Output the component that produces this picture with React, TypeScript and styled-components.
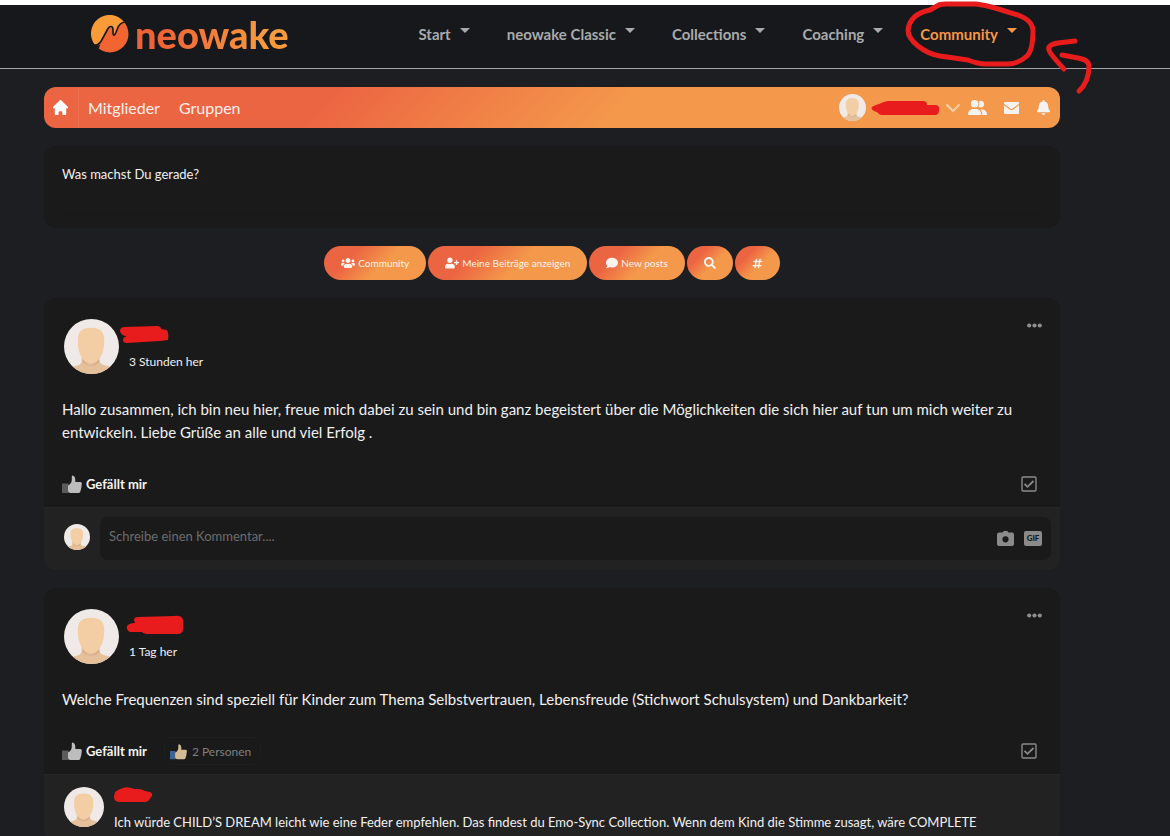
import React from "react";
import styled, { createGlobalStyle } from "styled-components";
import {
  FaBell,
  FaComment,
  FaHashtag,
  FaSearch,
  FaUserPlus,
  FaUsers,
} from "react-icons/fa";
import { FaUserGroup } from "react-icons/fa6";
import { HiHome } from "react-icons/hi";

const scribbleRed = "#e81c1c";
const warmGradient = "linear-gradient(135deg, #ec6542 28%, #f4994b 57%)";

const GlobalStyle = createGlobalStyle`
  *, *::before, *::after { box-sizing: border-box; }
  body {
    margin: 0;
    background: #1c1e22;
    color: #f1f1f1;
    font-family: Lato, "Liberation Sans", sans-serif;
    font-size: 15px;
  }
  button, input, textarea { font: inherit; color: inherit; }
  button { cursor: pointer; }
  svg { display: block; flex: none; }
`;

const Header = styled.header`
  position: relative;
  display: flex;
  align-items: center;
  justify-content: space-between;
  height: 69px;
  padding: 0 153px 0 91px;
  border-top: 5px solid #fff;
  border-bottom: 1px solid #a3a4a6;
  background: #17181b;
`;

const Logo = styled.a`
  display: flex;
  align-items: center;
  gap: 6px;
  padding-bottom: 6px;
  text-decoration: none;
`;

const Wordmark = styled.span`
  font-size: 38px;
  font-weight: 900;
  line-height: 38px;
  background: linear-gradient(90deg, #ee6238 15%, #f79a3e 85%);
  background-clip: text;
  -webkit-background-clip: text;
  color: transparent;
`;

const MainNav = styled.nav`
  display: flex;
  gap: 37px;
  padding-bottom: 6px;
`;

const NavLink = styled.a<{ $active?: boolean }>`
  display: flex;
  align-items: center;
  gap: 9px;
  color: ${(p) => (p.$active ? "#f79646" : "#a9aaac")};
  font-size: 15px;
  font-weight: 700;
  line-height: 20px;
  text-decoration: none;
`;

const Caret = styled.span`
  margin-bottom: 6px;
  border: 5px solid transparent;
  border-top-color: currentColor;
  border-bottom: 0;
`;

const Marking = styled.svg`
  position: absolute;
  top: -5px;
  right: 70px;
  z-index: 1;
  pointer-events: none;
`;

const Page = styled.main`
  display: flex;
  flex-direction: column;
  gap: 18px;
  margin: 18px 110px 0 44px;
`;

const Toolbar = styled.nav`
  display: flex;
  align-items: center;
  height: 41px;
  padding: 0 9px 0 7px;
  border-radius: 12px;
  background: ${warmGradient};
  color: #fdf3ee;
`;

const HomeLink = styled.a`
  display: flex;
  align-items: center;
  height: 100%;
  padding-right: 8px;
  border-right: 1px solid rgba(255, 255, 255, 0.08);
  color: #fff;
`;

const ToolbarLink = styled.a`
  margin-left: 9px;
  padding-right: 10px;
  color: #fdefe9;
  font-size: 16px;
  line-height: 24px;
  text-decoration: none;
`;

const ToolbarActions = styled.div`
  display: flex;
  align-items: center;
  gap: 17px;
  margin-left: auto;
`;

const IconButton = styled.button<{ $tone?: string }>`
  display: flex;
  align-items: center;
  gap: 5px;
  padding: 0;
  border: 0;
  background: none;
  color: ${(p) => p.$tone ?? "#f5f3f2"};
`;

const UserButton = styled(IconButton)`
  margin-right: -10px;
`;

const Composer = styled.section`
  padding: 16px 18px 18px;
  border-radius: 12px;
  background: #1a1a1a;
`;

const ComposerInput = styled.textarea`
  display: block;
  width: 100%;
  height: 48px;
  padding: 2px 0;
  border: 0;
  border-bottom: 1px solid #1d1d1d;
  background: none;
  font-size: 13px;
  line-height: 20px;
  outline: none;
  resize: none;
  &::placeholder { color: #f1f1f1; opacity: 1; }
`;

const Filters = styled.div`
  display: flex;
  justify-content: center;
  gap: 2px;
`;

const FilterButton = styled.button`
  display: flex;
  align-items: center;
  gap: 3px;
  height: 34px;
  padding: 0 17px;
  border: 0;
  border-radius: 17px;
  background: ${warmGradient};
  color: #fdf3ee;
  font-size: 10px;
`;

const Card = styled.article`
  overflow: hidden;
  border-radius: 12px;
  background: #1a1a1a;
`;

const CardBody = styled.div`
  padding: 21px 18px 8px;
`;

const Author = styled.div`
  display: flex;
  align-items: flex-start;
  padding-left: 2px;
`;

const AuthorText = styled.div`
  display: flex;
  flex-direction: column;
  gap: 8px;
  flex: 1;
  padding-top: 6px;
`;

const Time = styled.time`
  padding-left: 10px;
  font-size: 12px;
  line-height: 18px;
`;

const MenuButton = styled(IconButton)`
  height: 12px;
`;

const PostText = styled.p`
  margin: 24px 0 25px;
  font-size: 15px;
  line-height: 23px;
`;

const Actions = styled.div`
  display: flex;
  align-items: center;
  height: 30px;
  padding-right: 5px;
`;

const LikeButton = styled(IconButton)`
  gap: 4px;
  font-size: 13px;
  font-weight: 700;
`;

const LikeCount = styled.button`
  display: flex;
  align-items: center;
  gap: 5px;
  height: 28px;
  margin-left: 17px;
  padding: 0 9px 0 5px;
  border: 1px solid #1f1f1f;
  border-radius: 8px;
  background: none;
  color: #7f7f7f;
  font-size: 12px;
`;

const MarkButton = styled(IconButton)`
  margin-left: auto;
`;

const CardFooter = styled.div<{ $roomy?: boolean }>`
  display: flex;
  gap: 10px;
  padding: ${(p) => (p.$roomy ? 12 : 9)}px 9px 10px 20px;
  border-top: 1px solid #262626;
  background: #222;
`;

const CommentBox = styled.form`
  display: flex;
  align-items: center;
  flex: 1;
  gap: 10px;
  height: 43px;
  padding: 0 9px;
  border-radius: 8px;
  background: #1a1a1a;
`;

const CommentInput = styled.input`
  flex: 1;
  min-width: 0;
  padding: 0 0 5px;
  border: 0;
  background: none;
  font-size: 13px;
  outline: none;
  &::placeholder { color: #6d6d6d; opacity: 1; }
`;

const GifLabel = styled.span`
  width: 18px;
  border-radius: 2px;
  background: #8b8b8b;
  color: #1a1a1a;
  font-size: 8px;
  font-weight: 900;
  line-height: 15px;
  text-align: center;
`;

const AvatarSlot = styled.div`
  align-self: flex-start;
  padding-top: 7px;
`;

const Comment = styled.div`
  display: flex;
  flex-direction: column;
  gap: 10px;
`;

const CommentText = styled.p`
  margin: 0;
  font-size: 13px;
  line-height: 20px;
`;

function Avatar({ size }: { size: number }) {
  const id = React.useId();
  return (
    <svg width={size} height={size} viewBox="0 0 56 56" aria-hidden="true">
      <clipPath id={id}>
        <circle cx="28" cy="28" r="28" />
      </clipPath>
      <g clipPath={`url(#${id})`}>
        <rect width="56" height="56" fill="#efeae8" />
        <path d="M18 34h18v9q1 4 10 5l4 8H6l4-8q8-1 8-5z" fill="#e5c09b" />
        <path d="M19 41q8 12 17 0v3q-8 7-17 0z" fill="#d3ab86" />
        <path
          d="M27.500 9C37 9 41 13 41 22c0 13-5 23-13.500 23S14 35 14 22c0-9 4-13 13.500-13z"
          fill="#f3cda4"
        />
      </g>
    </svg>
  );
}

function Thumb({ cuff, hand, size }: { cuff: string; hand: string; size: number }) {
  return (
    <svg width={size} height={size} viewBox="0 0 20 20" aria-hidden="true">
      <path d="M0 9.500h6.500V19H0z" fill={cuff} />
      <path
        d="M6 11.500q4-2 3.800-6.500V2.500q.2-1.200 1.200-1 2.300.8 2.300 4V8h5q1.900.2 1.500 2-.2 4-1.500 7.500-.4 1.500-2 1.500H8.500Q6.200 19 6 17z"
        fill={hand}
      />
    </svg>
  );
}

function LogoMark() {
  return (
    <svg width="38" height="38" viewBox="0 0 38 38" aria-hidden="true">
      <circle cx="19" cy="19" r="18.500" fill="#f26533" />
      <path
        d="M33 7C29 8 27.500 10.500 26.500 13.500L24.500 18.500Q22.500 22 22 18.500L22 14.500C22 11 19 10.500 17 13.500L10.500 25.500C8.500 29 7 30 4 30A18.500 18.500 0 0 1 33 7z"
        fill="#f99c38"
      />
      <path d="M1 28.500L4.500 30Q7 31 9.500 29.500L7 35 0 34z" fill="#17181b" />
      <path
        d="M3.500 30C7 30.500 8.500 29 10.500 25.500L17 13.500C19 10.500 22 11 22 14.500L22 18.500Q22.500 22 24.500 18.500L26.500 13.500C27.500 10.500 29 8 33.500 7"
        fill="none"
        stroke="#17181b"
        strokeWidth="1.600"
      />
    </svg>
  );
}

const Check = () => (
  <svg width="16" height="16" viewBox="0 0 16 16" fill="none" stroke="currentColor" aria-hidden="true">
    <rect x="1" y="1" width="14" height="14" rx="1" strokeWidth="1.400" />
    <path d="M3.500 7.800l3 3L12.500 5" strokeWidth="1.800" />
  </svg>
);

const Dots = () => (
  <svg width="15" height="5" viewBox="0 0 15 5" fill="currentColor" aria-hidden="true">
    <circle cx="2.200" cy="2.500" r="2.100" />
    <circle cx="7.500" cy="2.500" r="2.100" />
    <circle cx="12.800" cy="2.500" r="2.100" />
  </svg>
);

const Camera = () => (
  <svg width="17" height="15" viewBox="0 0 17 15" fill="currentColor" aria-hidden="true">
    <path
      fillRule="evenodd"
      d="M5.500 1.500Q6 0 7 0h3q1 0 1.500 1.500H15q2 0 2 2V13q0 2-2 2H2q-2 0-2-2V3.500q0-2 2-2zM8.500 5.200a3.100 3.100 0 1 0 0 6.200 3.100 3.100 0 1 0 0-6.200z"
    />
  </svg>
);

const Envelope = () => (
  <svg width="15" height="12" viewBox="0 0 15 12" aria-hidden="true">
    <rect width="15" height="12" rx="1" fill="currentColor" />
    <path d="M0 2.500l6 4.500q1.500 1 3 0l6-4.500" fill="none" stroke="#f4994b" strokeWidth="1.100" />
  </svg>
);

function Scribble({ d, width, height }: { d: string; width: number; height: number }) {
  return (
    <svg width={width} height={height} viewBox={`0 0 ${width} ${height}`} aria-hidden="true">
      <path d={d} fill={scribbleRed} />
    </svg>
  );
}

const navItems = ["Start", "neowake Classic", "Collections", "Coaching", "Community"];

interface PostProps {
  name: React.ReactNode;
  time: string;
  text: string;
  likes?: string;
  hasComments?: boolean;
  children: React.ReactNode;
}

function Post({ name, time, text, likes, hasComments, children }: PostProps) {
  return (
    <Card>
      <CardBody>
        <Author>
          <Avatar size={55} />
          <AuthorText>
            {name}
            <Time>{time}</Time>
          </AuthorText>
          <MenuButton $tone="#8f8f8f" aria-label="Mehr">
            <Dots />
          </MenuButton>
        </Author>
        <PostText>{text}</PostText>
        <Actions>
          <LikeButton>
            <Thumb cuff="#5b5b5b" hand="#bdbdbd" size={20} />
            Gefällt mir
          </LikeButton>
          {likes && (
            <LikeCount>
              <Thumb cuff="#3c6595" hand="#d3bb96" size={17} />
              {likes}
            </LikeCount>
          )}
          <MarkButton $tone="#8a8a8a" aria-label="Markieren">
            <Check />
          </MarkButton>
        </Actions>
      </CardBody>
      <CardFooter $roomy={hasComments}>{children}</CardFooter>
    </Card>
  );
}

export default function App() {
  return (
    <>
      <GlobalStyle />
      <Header>
        <Logo href="#">
          <LogoMark />
          <Wordmark>neowake</Wordmark>
        </Logo>
        <MainNav>
          {navItems.map((item) => (
            <NavLink key={item} href="#" $active={item === "Community"}>
              {item}
              <Caret />
            </NavLink>
          ))}
        </MainNav>
        <Marking
          width="220"
          height="100"
          viewBox="0 0 220 100"
          fill="none"
          stroke={scribbleRed}
          strokeWidth="5"
          strokeLinecap="round"
          strokeLinejoin="round"
          aria-hidden="true"
        >
          <path d="M50 10L57 6Q60 4 66 4H96Q105 5 115 8L138 15Q152 20 153 30Q153 50 147 56Q138 64 128 64H106Q98 64 88 60L60 56Q48 54 38 46Q28 38 28 30Q30 14 50 10z" />
          <path d="M195 41L178 43Q167 45 169 50Q170 54 184 69" />
          <path d="M182 55L198 58Q209 60 209 66Q209 82 199 91" />
        </Marking>
      </Header>
      <Page>
        <Toolbar>
          <HomeLink href="#" aria-label="Startseite">
            <HiHome size={19} />
          </HomeLink>
          <ToolbarLink href="#">Mitglieder</ToolbarLink>
          <ToolbarLink href="#">Gruppen</ToolbarLink>
          <ToolbarActions>
            <UserButton aria-label="Profil">
              <Avatar size={27} />
              <Scribble
                width={69}
                height={16}
                d="M1 7q3-2 7-3Q14 1 18 1l34 0q4 0 4 4l9 0q4 1 3 5 0 5-4 5H10q-3-1-4-3Q-1 10 1 7z"
              />
              <svg width="16" height="10" viewBox="0 0 16 10" fill="none" stroke="#f8d0a8" strokeWidth="2" strokeLinecap="round" aria-hidden="true">
                <path d="M2 2l6 6 6-6" />
              </svg>
            </UserButton>
            <IconButton aria-label="Freunde">
              <FaUserGroup size={19} />
            </IconButton>
            <IconButton aria-label="Nachrichten">
              <Envelope />
            </IconButton>
            <IconButton aria-label="Benachrichtigungen">
              <FaBell size={15} />
            </IconButton>
          </ToolbarActions>
        </Toolbar>

        <Composer>
          <ComposerInput aria-label="Beitrag" placeholder="Was machst Du gerade?" />
        </Composer>

        <Filters>
          <FilterButton>
            <FaUsers size={14} />
            Community
          </FilterButton>
          <FilterButton>
            <FaUserPlus size={14} />
            Meine Beiträge anzeigen
          </FilterButton>
          <FilterButton>
            <FaComment size={12} />
            New posts
          </FilterButton>
          <FilterButton aria-label="Suchen">
            <FaSearch size={12} />
          </FilterButton>
          <FilterButton aria-label="Hashtags">
            <FaHashtag size={11} />
          </FilterButton>
        </Filters>

        <Post
          name={
            <Scribble
              width={50}
              height={20}
              d="M1 6q0-4 5-4L38 1q4 0 4 3l6 1q2 4 1 10l-8 1L8 18q-4 0-4-3 0-3 4-4-6 0-7-5z"
            />
          }
          time="3 Stunden her"
          text="Hallo zusammen, ich bin neu hier, freue mich dabei zu sein und bin ganz begeistert über die Möglichkeiten die sich hier auf tun um mich weiter zu entwickeln. Liebe Grüße an alle und viel Erfolg ."
        >
          <AvatarSlot>
            <Avatar size={26} />
          </AvatarSlot>
          <CommentBox>
            <CommentInput aria-label="Kommentar" placeholder="Schreibe einen Kommentar...." />
            <IconButton type="button" $tone="#8b8b8b" aria-label="Foto">
              <Camera />
            </IconButton>
            <IconButton type="button">
              <GifLabel>GIF</GifLabel>
            </IconButton>
          </CommentBox>
        </Post>

        <Post
          name={
            <Scribble
              width={64}
              height={20}
              d="M15 5q0-3 4-3L55 1q8-1 9 4v10q-1 4-5 4H30q-5 0-7-2l-12 0q-4-2-3-6 2-3 8-3z"
            />
          }
          time="1 Tag her"
          text="Welche Frequenzen sind speziell für Kinder zum Thema Selbstvertrauen, Lebensfreude (Stichwort Schulsystem) und Dankbarkeit?"
          likes="2 Personen"
          hasComments
        >
          <Avatar size={40} />
          <Comment>
            <Scribble
              width={39}
              height={15}
              d="M1 5q4-3 8-4 5-2 11 1h4q4 0 7 2l5 1q3 1 2 4l-3 4q-1 2-6 2H6q-6 0-6-5z"
            />
            <CommentText>
              Ich würde CHILD’S DREAM leicht wie eine Feder empfehlen. Das findest du Emo-Sync Collection. Wenn dem Kind die Stimme zusagt, wäre COMPLETE
            </CommentText>
          </Comment>
        </Post>
      </Page>
    </>
  );
}
